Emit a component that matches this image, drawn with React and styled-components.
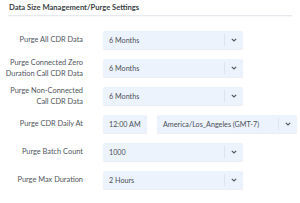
import React from "react";
import styled, { createGlobalStyle } from "styled-components";

const GlobalStyle = createGlobalStyle`
  body {
    margin: 0;
    background: #ffffff;
    font-family: Lato, "Open Sans", sans-serif;
  }
`;

const Panel = styled.div`
  width: 300px;
  height: 203px;
  background: #fff;
  overflow: hidden;
`;

const Header = styled.div`
  margin: 0 8px 0 8px;
  padding: 2px 0 3px 1px;
  font-size: 7.6px;
  font-weight: 700;
  color: #3a3f47;
  border-bottom: 1px solid #e6e9ee;
  box-shadow: 0 1px 1px rgba(0, 0, 0, 0.03);
`;

const Form = styled.div`
  display: grid;
  grid-template-columns: 83px auto;
  column-gap: 20px;
  row-gap: 10px;
  padding-top: 15px;
`;

const Label = styled.div`
  display: flex;
  align-items: center;
  justify-content: flex-end;
  text-align: right;
  font-size: 7.4px;
  line-height: 11.5px;
  color: #50555d;
  height: 18px;
`;

const Controls = styled.div`
  display: flex;
  gap: 10px;
`;

const Box = styled.div`
  display: flex;
  align-items: center;
  width: ${(p) => p.w}px;
  height: 18px;
  box-sizing: border-box;
  padding-left: 6px;
  background: #edf3fd;
  border-radius: 2px;
  box-shadow: 0 1px 1px rgba(60, 80, 120, 0.1);
  font-size: 7.2px;
  color: #4a4f57;
`;

const Value = styled.span`
  flex: 1;
  white-space: nowrap;
`;

const Divider = styled.span`
  width: 1px;
  height: 12px;
  background: #dde4ef;
`;

const Arrow = styled.span`
  width: 18px;
  display: flex;
  justify-content: center;
  align-items: center;
`;

const Chevron = () => (
  <svg width="6" height="4" viewBox="0 0 6 4">
    <path d="M0.8 0.8 L3 3 L5.2 0.8" fill="none" stroke="#555b66" strokeWidth="1.2" />
  </svg>
);

const Select = ({ value, w = 140 }) => (
  <Box w={w}>
    <Value>{value}</Value>
    <Divider />
    <Arrow>
      <Chevron />
    </Arrow>
  </Box>
);

const App = () => {
  return (
    <Panel>
      <GlobalStyle />
      <Header>Data Size Management/Purge Settings</Header>
      <Form>
        <Label>Purge All CDR Data</Label>
        <Controls>
          <Select value="6 Months" />
        </Controls>

        <Label>
          Purge Connected Zero
          <br />
          Duration Call CDR Data
        </Label>
        <Controls>
          <Select value="6 Months" />
        </Controls>

        <Label>
          Purge Non-Connected
          <br />
          Call CDR Data
        </Label>
        <Controls>
          <Select value="6 Months" />
        </Controls>

        <Label>Purge CDR Daily At</Label>
        <Controls>
          <Box w={44}>
            <Value>12:00 AM</Value>
          </Box>
          <Select value="America/Los_Angeles (GMT-7)" />
        </Controls>

        <Label>Purge Batch Count</Label>
        <Controls>
          <Select value="1000" />
        </Controls>

        <Label>Purge Max Duration</Label>
        <Controls>
          <Select value="2 Hours" />
        </Controls>
      </Form>
    </Panel>
  );
};

export default App;
